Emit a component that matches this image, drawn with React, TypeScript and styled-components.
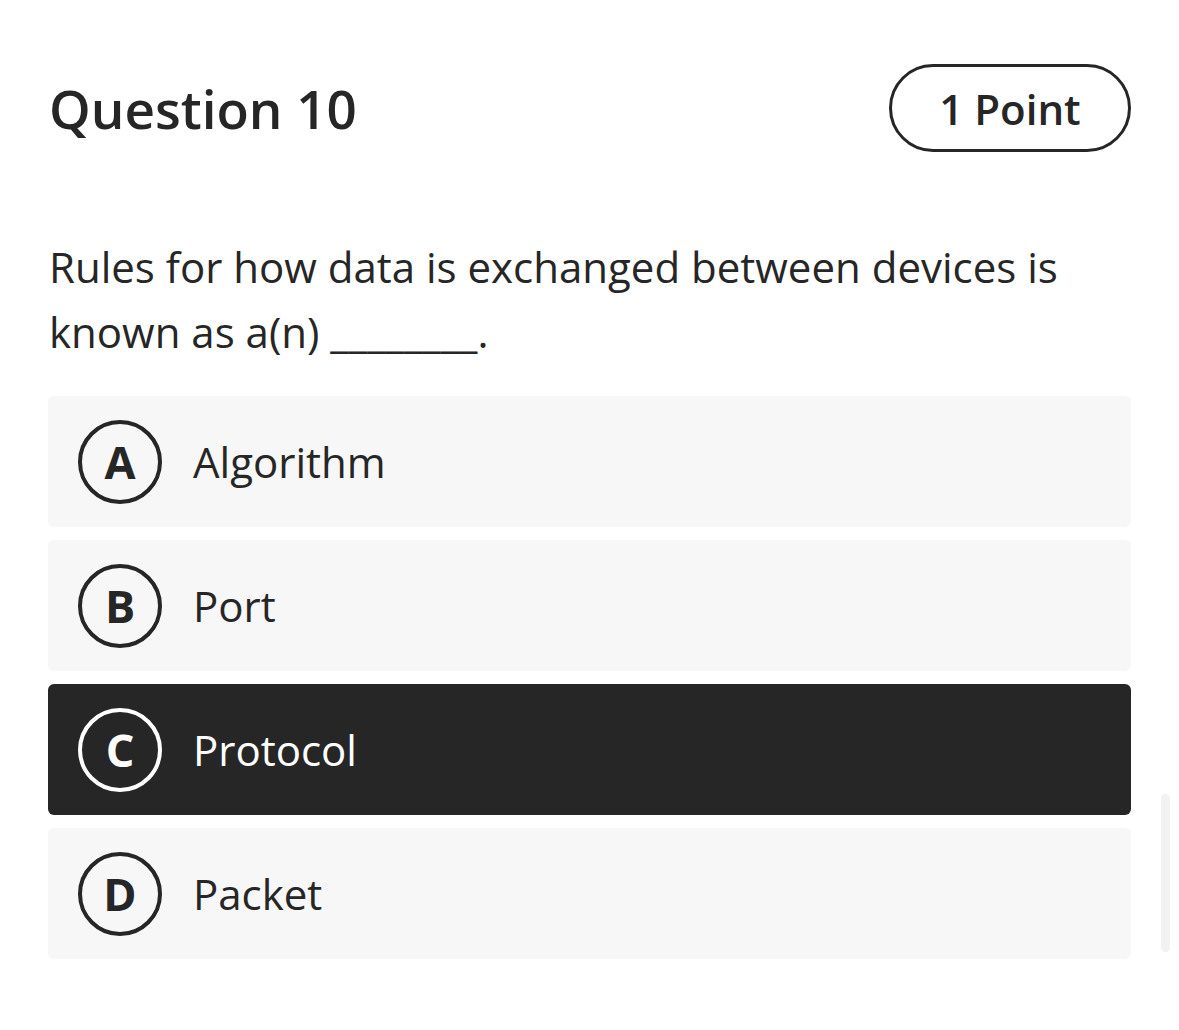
import React from "react";
import styled, { createGlobalStyle } from "styled-components";

const GlobalStyle = createGlobalStyle`
  html, body {
    margin: 0;
    padding: 0;
    background: #ffffff;
  }
  body {
    font-family: "Open Sans", "Noto Sans", sans-serif;
    color: #262626;
  }
`;

const options = [
  { letter: "A", label: "Algorithm" },
  { letter: "B", label: "Port" },
  { letter: "C", label: "Protocol" },
  { letter: "D", label: "Packet" },
];

const selected = "C";

export default function App() {
  return (
    <>
      <GlobalStyle />
      <Page>
        <Header>
          <Title>Question 10</Title>
          <Points>1 Point</Points>
        </Header>
        <QuestionText>
          Rules for how data is exchanged between devices is known as a(n) ________.
        </QuestionText>
        <OptionList>
          {options.map((o) => (
            <Option key={o.letter} active={o.letter === selected}>
              <LetterBadge active={o.letter === selected}>{o.letter}</LetterBadge>
              <OptionLabel>{o.label}</OptionLabel>
            </Option>
          ))}
        </OptionList>
        <ScrollThumb />
      </Page>
    </>
  );
}

const Page = styled.div`
  position: relative;
  box-sizing: border-box;
  width: 1179px;
  height: 1030px;
  padding: 64px 48px 0 48px;
`;

const Header = styled.div`
  display: flex;
  justify-content: space-between;
  align-items: center;
`;

const Title = styled.div`
  font-size: 53px;
  font-weight: 600;
  padding-left: 1px;
`;

const Points = styled.div`
  box-sizing: border-box;
  width: 242px;
  height: 88px;
  border: 3px solid #262626;
  border-radius: 44px;
  display: flex;
  align-items: center;
  justify-content: center;
  font-size: 42px;
  font-weight: 600;
`;

const QuestionText = styled.div`
  margin-top: 82px;
  padding-left: 1px;
  width: 1070px;
  font-size: 42px;
  line-height: 65px;
`;

const OptionList = styled.div`
  margin-top: 32px;
  display: flex;
  flex-direction: column;
  gap: 13px;
`;

const Option = styled.div<{ active?: boolean }>`
  height: 131px;
  border-radius: 6px;
  background: ${(p) => (p.active ? "#262626" : "#f7f7f7")};
  color: ${(p) => (p.active ? "#ffffff" : "#262626")};
  display: flex;
  align-items: center;
  padding-left: 30px;
`;

const LetterBadge = styled.div<{ active?: boolean }>`
  box-sizing: border-box;
  width: 84px;
  height: 84px;
  border-radius: 50%;
  border: 4px solid ${(p) => (p.active ? "#ffffff" : "#262626")};
  display: flex;
  align-items: center;
  justify-content: center;
  font-size: 45px;
  font-weight: 700;
`;

const OptionLabel = styled.div`
  margin-left: 31px;
  font-size: 42px;
`;

const ScrollThumb = styled.div`
  position: absolute;
  right: 9px;
  top: 794px;
  width: 9px;
  height: 158px;
  border-radius: 5px;
  background: #f2f2f2;
`;
